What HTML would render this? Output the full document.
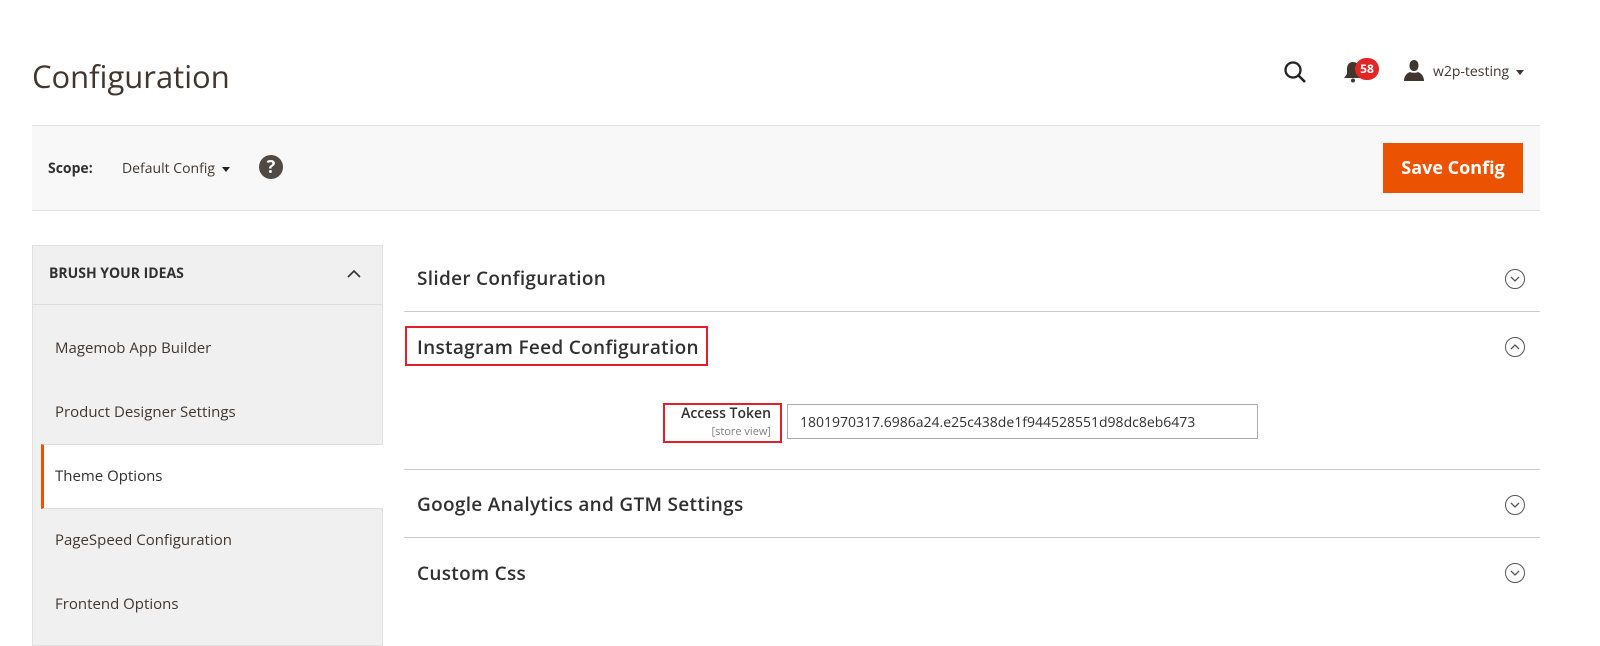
<!DOCTYPE html>
<html><head><meta charset="utf-8"><style>
*{box-sizing:border-box;margin:0;padding:0}
body{width:1600px;height:646px;overflow:hidden;background:#fff;font-family:"Open Sans","Liberation Sans",sans-serif;color:#303030;position:relative}
.a{position:absolute}
h1{position:absolute;left:32px;top:56px;font-size:31px;font-weight:400;color:#41362f}
.bar{left:32px;top:125px;width:1508px;height:86px;background:#f8f8f8;border-top:1px solid #e3e3e3;border-bottom:1px solid #e3e3e3}
.btn{left:1383px;top:143px;width:140px;height:50px;background:#eb5202;color:#fff;font-weight:700;font-size:18px;text-align:center;line-height:50px}
.side{left:32px;top:245px;width:351px;height:401px;background:#f0f0f0;border:1px solid #e0e0e0}
.it{position:absolute;left:22px;font-size:15px;color:#41362f}
.sec{position:absolute;left:417px;font-size:19px;font-weight:600;color:#303030;letter-spacing:.3px}
.ln{position:absolute;left:404px;width:1136px;height:1px;background:#ccc}
.ci{position:absolute;left:1505px;width:20px;height:20px;border:1px solid #555;border-radius:50%}
</style></head><body>
<h1>Configuration</h1>
<svg class="a" style="left:1283px;top:60px" width="24" height="24" viewBox="0 0 24 24"><circle cx="10" cy="10" r="7.5" fill="none" stroke="#222" stroke-width="2.3"/><path d="M15.5 15.5L22 22" stroke="#222" stroke-width="2.6"/></svg>
<svg class="a" style="left:1343px;top:61px" width="20" height="22" viewBox="0 0 20 22"><path d="M10 1c-4 0-6 3-6 7v5l-3 4h18l-3-4V8c0-4-2-7-6-7z" fill="#41362f"/><circle cx="10" cy="19.5" r="2" fill="#41362f"/></svg>
<div class="a" style="left:1355px;top:58px;width:24px;height:22px;border-radius:11px;background:#e22626;color:#fff;font-size:12px;font-weight:700;text-align:center;line-height:22px">58</div>
<svg class="a" style="left:1403px;top:59px" width="22" height="22" viewBox="0 0 22 22"><path d="M11 1c3 0 4.5 2.5 4.5 5.5S14 12 11 12 6.5 9.5 6.5 6.5 8 1 11 1zM1 22c0-5 3-8 6-9 2 1 6 1 8 0 3 1 6 4 6 9z" fill="#41362f"/></svg>
<div class="a" style="left:1433px;top:62px;font-size:14px;color:#41362f">w2p-testing</div>
<div class="a" style="left:1516px;top:70px;border:4px solid transparent;border-top:5px solid #41362f"></div>
<div class="a bar"></div>
<div class="a" style="left:48px;top:159px;font-size:14px;font-weight:700;color:#303030">Scope:</div>
<div class="a" style="left:122px;top:159px;font-size:14px;color:#41362f">Default Config</div>
<div class="a" style="left:222px;top:167px;border:4.5px solid transparent;border-top:5px solid #222"></div>
<div class="a" style="left:259px;top:155px;width:24px;height:24px;border-radius:50%;background:#514943;color:#fff;font-weight:700;font-size:18px;text-align:center;line-height:24px">?</div>
<div class="a btn">Save Config</div>
<div class="a side"></div>
<div class="a" style="left:33px;top:304px;width:350px;height:1px;background:#ddd"></div>
<div class="it" style="left:49px;top:264px;font-weight:700;font-size:14px;color:#303030">BRUSH YOUR IDEAS</div>
<svg class="a" style="left:347px;top:269px" width="14" height="10" viewBox="0 0 14 10"><path d="M1 8l6-6 6 6" fill="none" stroke="#333" stroke-width="1.6"/></svg>
<div class="it" style="left:55px;top:338px">Magemob App Builder</div>
<div class="it" style="left:55px;top:402px">Product Designer Settings</div>
<div class="a" style="left:41px;top:444px;width:342px;height:65px;background:#fff;border-top:1px solid #ddd;border-bottom:1px solid #ddd;border-left:3px solid #eb5202"></div>
<div class="it" style="left:55px;top:466px;color:#303030">Theme Options</div>
<div class="it" style="left:55px;top:530px">PageSpeed Configuration</div>
<div class="it" style="left:55px;top:594px">Frontend Options</div>
<div class="sec" style="top:265px">Slider Configuration</div>
<div class="ci" style="top:269px"><svg width="18" height="18" viewBox="0 0 18 18"><path d="M5 7l4 4 4-4" fill="none" stroke="#555" stroke-width="1.3"/></svg></div>
<div class="ln" style="top:311px"></div>
<div class="a" style="left:405px;top:326px;width:303px;height:40px;border:2px solid #e0202a"></div>
<div class="sec" style="top:334px">Instagram Feed Configuration</div>
<div class="ci" style="top:337px"><svg width="18" height="18" viewBox="0 0 18 18"><path d="M5 11l4-4 4 4" fill="none" stroke="#555" stroke-width="1.3"/></svg></div>
<div class="a" style="left:663px;top:403px;width:119px;height:40px;border:2px solid #e0202a"></div>
<div class="a" style="left:673px;top:404px;width:98px;text-align:right;font-size:14px;font-weight:600;color:#303030">Access Token</div>
<div class="a" style="left:673px;top:424px;width:98px;text-align:right;font-size:11px;color:#808080">[store view]</div>
<div class="a" style="left:787px;top:404px;width:471px;height:35px;border:1px solid #adadad;font-size:14px;padding:8px 12px;color:#303030">1801970317.6986a24.e25c438de1f944528551d98dc8eb6473</div>
<div class="ln" style="top:469px"></div>
<div class="sec" style="top:491px">Google Analytics and GTM Settings</div>
<div class="ci" style="top:495px"><svg width="18" height="18" viewBox="0 0 18 18"><path d="M5 7l4 4 4-4" fill="none" stroke="#555" stroke-width="1.3"/></svg></div>
<div class="ln" style="top:537px"></div>
<div class="sec" style="top:560px">Custom Css</div>
<div class="ci" style="top:563px"><svg width="18" height="18" viewBox="0 0 18 18"><path d="M5 7l4 4 4-4" fill="none" stroke="#555" stroke-width="1.3"/></svg></div>
</body></html>
